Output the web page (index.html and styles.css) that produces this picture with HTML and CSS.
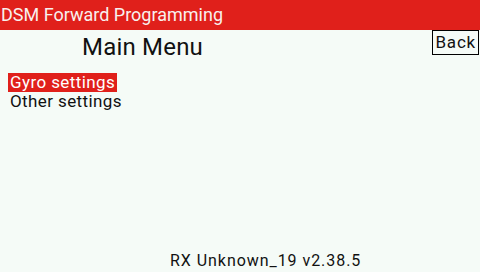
FILE: index.html
```html
<!DOCTYPE html>
<html>
<head>
<meta charset="utf-8">
<link rel="stylesheet" href="styles.css">
</head>
<body>
<div class="screen">
  <header class="titlebar">DSM Forward Programming</header>
  <div class="toprow">
    <h1 class="title">Main Menu</h1>
    <div class="back">Back</div>
  </div>
  <ul class="menu">
    <li class="item selected">Gyro settings</li>
    <li class="item">Other settings</li>
  </ul>
  <footer class="footer">RX Unknown_19 v2.38.5</footer>
</div>
</body>
</html>
```
FILE: styles.css
```css
html, body {
  margin: 0;
  padding: 0;
}
body {
  background: #f5fbf7;
  font-family: Roboto, "Liberation Sans", sans-serif;
  color: #111;
}
.screen {
  width: 480px;
  height: 272px;
  display: flex;
  flex-direction: column;
}
.titlebar {
  height: 30px;
  background: #e0201b;
  color: #f8f0ee;
  font-size: 18px;
  line-height: 30px;
  padding-left: 1px;
}
.toprow {
  display: flex;
  justify-content: space-between;
  align-items: flex-start;
}
.title {
  margin: 0 0 0 82px;
  font-weight: normal;
  font-size: 24px;
  line-height: 34px;
  letter-spacing: 0.2px;
}
.back {
  border: 1px solid #000;
  font-size: 17px;
  line-height: 23px;
  padding: 0 2px;
  letter-spacing: 0.8px;
  margin-right: 1px;
}
.menu {
  list-style: none;
  margin: 9px 0 0 8px;
  padding: 0;
}
.item {
  font-size: 17px;
  line-height: 19px;
  padding: 0 2px;
  letter-spacing: 0.4px;
  width: max-content;
}
.selected {
  background: #e0201b;
  color: #fff;
}
.footer {
  margin-top: auto;
  margin-left: 170px;
  font-size: 16px;
  line-height: 20px;
  letter-spacing: 0.95px;
  padding-bottom: 1px;
}
```
